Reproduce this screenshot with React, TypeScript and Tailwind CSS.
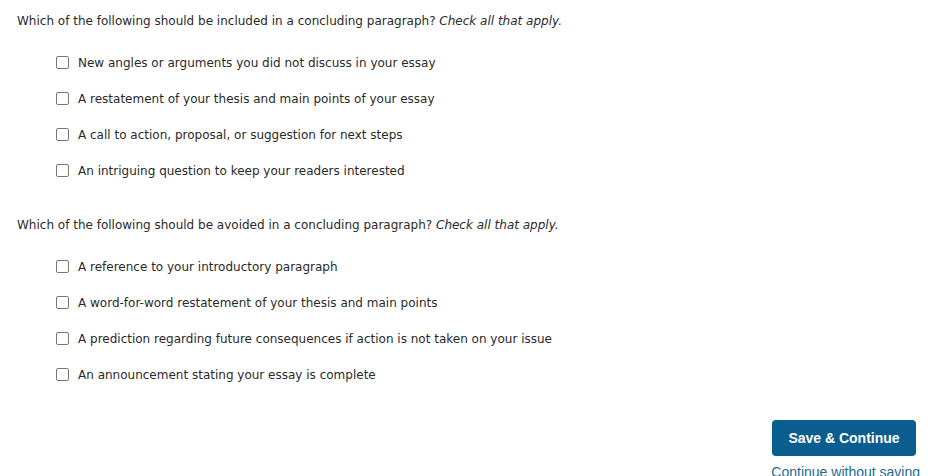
// ** React Import
import type { FC } from "react"

const included = [
    "New angles or arguments you did not discuss in your essay",
    "A restatement of your thesis and main points of your essay",
    "A call to action, proposal, or suggestion for next steps",
    "An intriguing question to keep your readers interested",
]

const avoided = [
    "A reference to your introductory paragraph",
    "A word-for-word restatement of your thesis and main points",
    "A prediction regarding future consequences if action is not taken on your issue",
    "An announcement stating your essay is complete",
]

interface QuestionProps {
    prompt: string;
    options: string[];
}

const Question: FC<QuestionProps> = ({ prompt, options }) => (
    <div>
        <p className="leading-4 pl-[17px]">
            {prompt} <em>Check all that apply.</em>
        </p>
        <ul className="mt-[16px] pl-[56px]">
            {options.map((item, index) => (
                <li key={index} className="flex items-center h-9">
                    <span className="w-[13px] h-[13px] border border-[#767676] rounded-[2px] bg-white shrink-0 mt-[-1px]" />
                    <span className="ml-[9px] leading-4">{item}</span>
                </li>
            ))}
        </ul>
    </div>
)

const App: FC = () => {
    return (
        <div
            className="w-[934px] h-[476px] overflow-hidden bg-white text-[#2a2a2a] text-[12px] pt-[13px]"
            style={{ fontFamily: '"DejaVu Sans", Verdana, sans-serif' }}
        >
            <Question prompt="Which of the following should be included in a concluding paragraph?" options={included} />
            <div className="mt-[28px]">
                <Question prompt="Which of the following should be avoided in a concluding paragraph?" options={avoided} />
            </div>
            <div className="mt-[27px] flex flex-col items-end pr-[18px]" style={{ fontFamily: '"Liberation Sans", Arial, sans-serif' }}>
                <button className="h-9 w-[144px] rounded-[4px] bg-[#0a5e8f] text-white font-bold text-[14px]">
                    Save &amp; Continue
                </button>
                <a className="mt-[8px] mr-[-4px] text-[14px] leading-4 text-[#1b6b8f]">Continue without saving</a>
            </div>
        </div>
    )
}

export default App
